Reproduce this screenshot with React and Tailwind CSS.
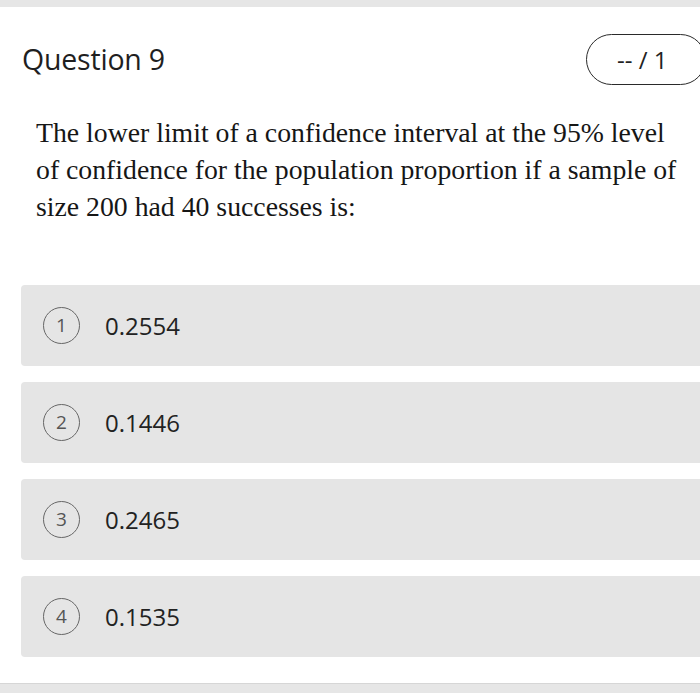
import React from 'react';

const OPTIONS = ['0.2554', '0.1446', '0.2465', '0.1535'];

export default function App() {
  return (
    <div className="w-[700px] h-[693px] overflow-hidden bg-[#e6e6e6] flex flex-col" style={{ fontFamily: '"Open Sans", sans-serif' }}>
      <div className="h-[7px] shrink-0" />
      <div className="flex-1 bg-white flex flex-col pl-[21px] mr-[-6px]">
        <div className="flex items-center justify-between h-[51px] mt-[27px]">
          <h2 className="text-[28.5px] font-medium text-[#1f1f1f] leading-none pl-[1px] tracking-[-0.2px]">Question 9</h2>
          <div className="h-[51px] w-[120px] rounded-full border-[1.5px] border-[#2a2a2a] flex items-center pl-[30px] text-[24px] text-[#222]">
            -- / 1
          </div>
        </div>
        <p
          className="mt-[29px] pl-[15px] w-[672px] text-[27.75px] leading-[37px] text-[#161616]"
          style={{ fontFamily: '"Liberation Serif", serif' }}
        >
          The lower limit of a confidence interval at the 95% level of confidence for the population proportion if a sample of size 200 had 40 successes is:
        </p>
        <div className="mt-[60px] flex flex-col gap-[16px]">
          {OPTIONS.map((o, i) => (
            <div key={o} className="h-[81px] bg-[#e5e5e5] rounded-l-[4px] flex items-center pl-[22px]">
              <span className="w-[37px] h-[37px] rounded-full border-[1.5px] border-[#666] flex items-center justify-center text-[19px] text-[#555]">
                {i + 1}
              </span>
              <span className="ml-[25px] text-[24px] text-[#222]">{o}</span>
            </div>
          ))}
        </div>
      </div>
      <div className="h-[10px] shrink-0 border-t border-[#d6d6d6]" />
    </div>
  );
}
